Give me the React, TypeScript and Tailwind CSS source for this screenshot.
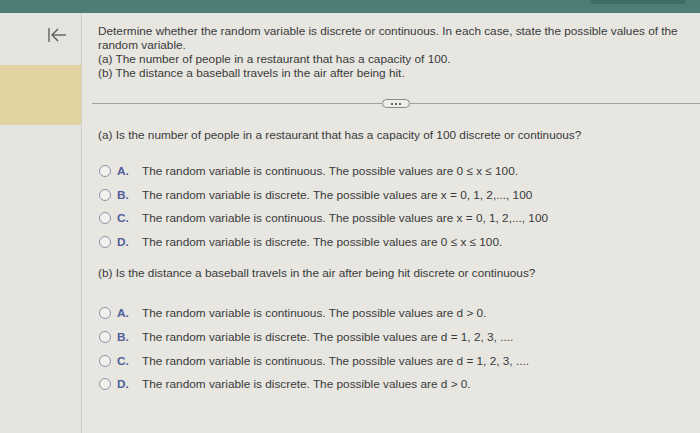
import React from "react";

const optsA = [
  ["A.", "The random variable is continuous. The possible values are 0 ≤ x ≤ 100."],
  ["B.", "The random variable is discrete. The possible values are x = 0, 1, 2,..., 100"],
  ["C.", "The random variable is continuous. The possible values are x = 0, 1, 2,..., 100"],
  ["D.", "The random variable is discrete. The possible values are 0 ≤ x ≤ 100."],
];
const optsB = [
  ["A.", "The random variable is continuous. The possible values are d > 0."],
  ["B.", "The random variable is discrete. The possible values are d = 1, 2, 3, ...."],
  ["C.", "The random variable is continuous. The possible values are d = 1, 2, 3, ...."],
  ["D.", "The random variable is discrete. The possible values are d > 0."],
];

function Option({ l, t }: { l: string; t: string }) {
  return (
    <div className="flex items-center h-[23.8px]">
      <span className="w-[12px] h-[12px] rounded-full border-[1.5px] border-[#8d92aa] bg-[#f2f1ee] mr-[6px]" />
      <span className="w-[25px] font-bold text-[#4f5d98]">{l}</span>
      <span>{t}</span>
    </div>
  );
}

export default function App() {
  return (
    <div
      className="w-[700px] h-[433px] overflow-hidden bg-[#e7e6e1] flex flex-col text-[#3a3a3a] text-[11.8px] leading-[14px]"
      style={{ fontFamily: '"Liberation Sans", Arial, sans-serif' }}
    >
      <div className="h-[13px] bg-[#4d7d75] shrink-0 relative">
        <div className="absolute right-[14px] top-0 w-[96px] h-[4px] bg-[#3f6c64] rounded-b" />
      </div>
      <div className="flex flex-1">
        <div className="w-[82px] border-r border-[#cfcecb] bg-[#e4e3df] flex flex-col">
          <div className="h-[52px] flex items-start pt-[14px] pl-[47px]">
            <svg width="20" height="16" viewBox="0 0 20 16" fill="none" stroke="#555" strokeWidth="1.3">
              <path d="M2 1 V15" />
              <path d="M5 8 H19" />
              <path d="M11 2 L5 8 L11 14" />
            </svg>
          </div>
          <div className="h-[60px] bg-[#e2d3a3]" />
        </div>
        <div className="flex-1 flex flex-col">
          <div className="pl-[16px] pt-[11px] h-[86px]">
            <div className="w-[580px]">Determine whether the random variable is discrete or continuous. In each case, state the possible values of the random variable.</div>
            <div>(a) The number of people in a restaurant that has a capacity of 100.</div>
            <div>(b) The distance a baseball travels in the air after being hit.</div>
          </div>
          <div className="flex items-center pl-[10px]">
            <div className="flex-1 h-px bg-[#a3a3a0]" />
            <div className="w-[28px] h-[9px] rounded-full border border-[#8a8a88] bg-[#eeede9] flex items-center justify-center gap-[2px]">
              <span className="w-[2px] h-[2px] bg-[#666]" />
              <span className="w-[2px] h-[2px] bg-[#666]" />
              <span className="w-[2px] h-[2px] bg-[#666]" />
            </div>
            <div className="flex-1 h-px bg-[#a3a3a0]" />
          </div>
          <div className="pl-[16px] pt-[20px]">
            <div>(a) Is the number of people in a restaurant that has a capacity of 100 discrete or continuous?</div>
            <div className="mt-[17px] pl-[1px]">
              {optsA.map(([l, t]) => (
                <Option key={l} l={l} t={t} />
              ))}
            </div>
            <div className="mt-[12px]">(b) Is the distance a baseball travels in the air after being hit discrete or continuous?</div>
            <div className="mt-[21px] pl-[1px]">
              {optsB.map(([l, t]) => (
                <Option key={l} l={l} t={t} />
              ))}
            </div>
          </div>
        </div>
      </div>
    </div>
  );
}
